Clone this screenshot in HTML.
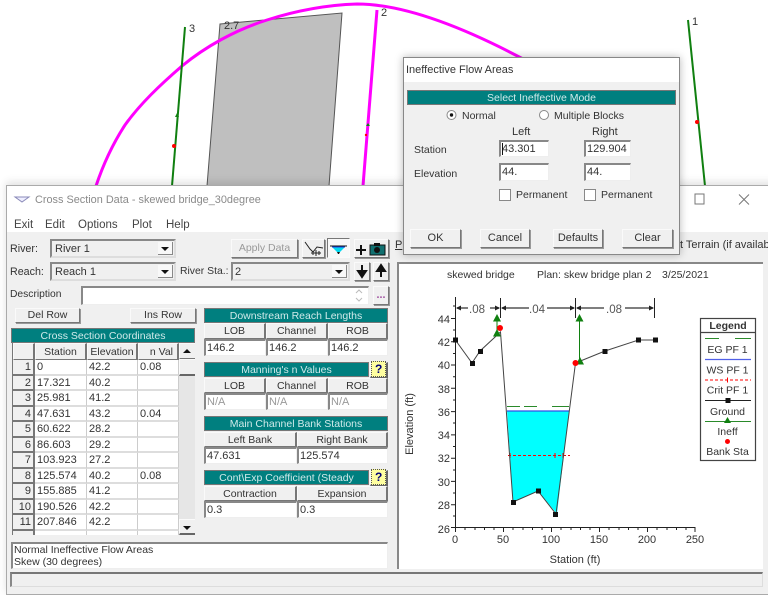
<!DOCTYPE html>
<html>
<head>
<meta charset="utf-8">
<style>
html,body{margin:0;padding:0;background:#fff}
body{width:768px;height:590px;position:relative;overflow:hidden;font-family:"Liberation Sans",sans-serif;font-size:11px;color:#333;filter:blur(.3px)}
div{position:absolute;box-sizing:border-box;white-space:nowrap}
svg{position:absolute;left:0;top:0}
.t{line-height:14px;height:14px}
.l{font-size:10.7px}
.teal{background:#007f7f;color:#cfeaea;text-align:center;font-size:10.5px;border:1px solid #777;line-height:14px!important}
.btn{background:#f0f0f0;border:1px solid;border-color:#fafafa #777 #777 #fafafa;box-shadow:1px 1px 0 #999;text-align:center;color:#333;font-size:10.7px}
.in{background:#fff;border:1px solid;border-color:#888 #eee #eee #888;border-width:2px 1px 1px 2px;padding-left:1px;color:#333;font-size:11px}
.cb{background:#f0f0f0;border:2px solid;border-color:#888 #ddd #ddd #888;padding-left:3px;font-size:11px;color:#333;line-height:16px!important}
.arr{right:1px;top:1px;bottom:1px;width:15px;background:#f8f8f8;border-right:1px solid #888;border-bottom:1px solid #888}
.arr:after{content:"";position:absolute;left:3px;top:5px;border:4px solid transparent;border-top:4px solid #111;border-bottom:0}
.cell{background:#fff;border-bottom:2px solid #ddd;border-right:1px solid #ccc;padding-left:2px;line-height:15px;font-size:11px;color:#333}
.rh{background:#f0f0f0;border-right:2px solid #777;border-bottom:2px solid #777;text-align:right;padding-right:2px;line-height:15px;font-size:11px;color:#333}
.h{background:#f0f0f0;border:1px solid;border-color:#fafafa #777 #777 #fafafa;border-width:1px 2px 1px 1px;text-align:center;line-height:14px;font-size:10.5px;color:#333}
.help{background:#f0f0f0;border:1px solid;border-color:#fafafa #666 #666 #fafafa;border-width:1px 2px 2px 1px;text-align:center;line-height:13px;font-weight:bold;color:#007;font-size:12px}
.help span{background:#ffffa0;padding:0 3px;border:1px dotted #555}
</style>
</head>
<body>

<!-- background drawing -->
<svg width="768" height="590" viewBox="0 0 768 590">
  <polygon points="220,24 342,13 329,186 207,186" fill="#bfbfbf" stroke="#555" stroke-width="1"/>
  <path d="M96,186 C103,165 112,145 125,125 C140,104 160,85 182,66 C205,47 235,30 267,20 C295,11 325,5 357,4 C395,4 450,20 525,60" fill="none" stroke="#ff00ff" stroke-width="3"/>
  <line x1="185" y1="27" x2="172" y2="186" stroke="#108010" stroke-width="2"/>
  <line x1="377" y1="10" x2="363" y2="186" stroke="#ff00ff" stroke-width="3"/>
  <line x1="688" y1="20" x2="705" y2="186" stroke="#108010" stroke-width="2"/>
  <circle cx="174" cy="146" r="2" fill="#f00"/>
  <circle cx="697" cy="122" r="2" fill="#f00"/>
  <path d="M177,113 l2,4 h-4z" fill="#108010"/>
  <path d="M368,123 l2,3 h-4z" fill="#108010"/>
  <circle cx="366" cy="135" r="1.2" fill="#f00"/>
</svg>
<div class="t" style="left:189px;top:22px;font-size:11px">3</div>
<div class="t" style="left:381px;top:6px;font-size:11px">2</div>
<div class="t" style="left:692px;top:15px;font-size:11px">1</div>
<div class="t" style="left:224px;top:19px;font-size:11px">2.7</div>

<!-- main window -->
<div style="left:6px;top:185px;width:770px;height:410px;background:#f0f0f0;border:1px solid #aaa;box-shadow:0 -3px 8px rgba(0,0,0,.12)">
  <div style="left:0;top:0;right:0;height:46px;background:#fff"></div>
</div>
<svg width="768" height="590" viewBox="0 0 768 590" style="pointer-events:none">
  <path d="M15,197 h14 l-7,5z" fill="#eef" stroke="#8a8ab8" stroke-width="1"/>
  <rect x="695" y="194" width="9" height="10" fill="none" stroke="#777"/>
  <path d="M739,194.500 l10,10 M749,194.500 l-10,10" stroke="#777" fill="none"/>
</svg>
<div class="t" style="left:35px;top:193px;font-size:10.9px;color:#8a8a8a">Cross Section Data - skewed bridge_30degree</div>
<div class="t" style="left:14px;top:218px;color:#444;font-size:11.5px">Exit</div>
<div class="t" style="left:45px;top:218px;color:#444;font-size:11.5px">Edit</div>
<div class="t" style="left:78px;top:218px;color:#444;font-size:11.5px">Options</div>
<div class="t" style="left:132px;top:218px;color:#444;font-size:11.5px">Plot</div>
<div class="t" style="left:166px;top:218px;color:#444;font-size:11.5px">Help</div>

<!-- top controls -->
<div class="t l" style="left:10px;top:242px">River:</div>
<div class="cb" style="left:50px;top:239px;width:126px;height:19px">River 1<div class="arr"></div></div>
<div class="t l" style="left:10px;top:265px">Reach:</div>
<div class="cb" style="left:50px;top:262px;width:126px;height:19px">Reach 1<div class="arr"></div></div>
<div class="t" style="left:180px;top:265px;font-size:10.4px">River Sta.:</div>
<div class="cb" style="left:231px;top:262px;width:119px;height:19px;padding-left:2px">2<div class="arr"></div></div>
<div class="btn" style="left:231px;top:239px;width:67px;height:19px;line-height:17px;color:#999;font-size:10.5px">Apply Data</div>
<div class="btn" style="left:302px;top:239px;width:23px;height:19px"></div>
<div class="btn" style="left:327px;top:238px;width:23px;height:20px;border-color:#777 #fafafa #fafafa #777;background:#f8f8f8;box-shadow:none"></div>
<div class="btn" style="left:354px;top:239px;width:35px;height:19px"></div>
<div class="btn" style="left:354px;top:262px;width:16px;height:19px"></div>
<div class="btn" style="left:373px;top:262px;width:16px;height:19px"></div>
<svg width="768" height="590" viewBox="0 0 768 590">
  <path d="M305,242 l5,7 l3,3 l4,-5 l6,1" fill="none" stroke="#222" stroke-width="1"/>
  <path d="M311,253 h10 M313,251 v4 M319,251 v4 M316,250 v6" stroke="#222" fill="none"/>
  <path d="M330,246 h17" stroke="#111" stroke-width="1"/>
  <path d="M332,247 h13 l-5,5 h-3z" fill="#00d8f0"/>
  <path d="M332,247 h13" stroke="#2040e0"/>
  <path d="M337,252 h3 l-1,2 h-1z" fill="#111"/>
  <path d="M361,245 v10 M356,250 h10" stroke="#111" stroke-width="2"/>
  <rect x="370" y="245" width="15" height="10" fill="#107070" stroke="#111"/>
  <rect x="374" y="243" width="6" height="3" fill="#111"/>
  <circle cx="377" cy="250" r="3" fill="#111"/>
  <path d="M362,265 v9 M358,271 l4,6 l4,-6z" stroke="#111" stroke-width="2" fill="#111"/>
  <path d="M381,268 v9 M377,271 l4,-6 l4,6z" stroke="#111" stroke-width="2" fill="#111"/>
</svg>
<div class="t" style="left:10px;top:288px;font-size:10.3px">Description</div>
<div class="in" style="left:81px;top:286px;width:288px;height:19px"></div>
<div class="btn" style="left:373px;top:286px;width:16px;height:19px;line-height:16px;color:#a050a0;font-weight:bold">...</div>
<svg width="768" height="590" viewBox="0 0 768 590">
  <path d="M356,293 l3,-3 l3,3 M356,298 l3,3 l3,-3" fill="none" stroke="#bbb"/>
</svg>
<div class="btn" style="left:15px;top:308px;width:65px;height:15px;line-height:13px;font-size:10.5px">Del Row</div>
<div class="btn" style="left:130px;top:308px;width:66px;height:15px;line-height:13px;font-size:10.5px">Ins Row</div>

<!-- coordinates table -->
<div class="teal" style="left:11px;top:328px;width:184px;height:15px">Cross Section Coordinates</div>
<div style="left:12px;top:343px;width:183px;height:192px;background:#f0f0f0;border-left:1px solid #777;overflow:hidden">
  <div class="h" style="left:0;top:0;width:22px;height:17px"></div>
  <div class="h" style="left:22px;top:0;width:52px;height:17px;line-height:17px">Station</div>
  <div class="h" style="left:74px;top:0;width:51px;height:17px;line-height:17px">Elevation</div>
  <div class="h" style="left:125px;top:0;width:41px;height:17px;line-height:17px;text-align:right;padding-right:4px">n Val</div>

  <div class="rh" style="left:0;top:17px;width:22px;height:15.5px">1</div><div class="cell" style="left:22px;top:17px;width:52px;height:15.5px">0</div><div class="cell" style="left:74px;top:17px;width:51px;height:15.5px">42.2</div><div class="cell" style="left:125px;top:17px;width:41px;height:15.5px">0.08</div>
  <div class="rh" style="left:0;top:32.5px;width:22px;height:15.5px">2</div><div class="cell" style="left:22px;top:32.5px;width:52px;height:15.5px">17.321</div><div class="cell" style="left:74px;top:32.5px;width:51px;height:15.5px">40.2</div><div class="cell" style="left:125px;top:32.5px;width:41px;height:15.5px"></div>
  <div class="rh" style="left:0;top:48px;width:22px;height:15.5px">3</div><div class="cell" style="left:22px;top:48px;width:52px;height:15.5px">25.981</div><div class="cell" style="left:74px;top:48px;width:51px;height:15.5px">41.2</div><div class="cell" style="left:125px;top:48px;width:41px;height:15.5px"></div>
  <div class="rh" style="left:0;top:63.5px;width:22px;height:15.5px">4</div><div class="cell" style="left:22px;top:63.5px;width:52px;height:15.5px">47.631</div><div class="cell" style="left:74px;top:63.5px;width:51px;height:15.5px">43.2</div><div class="cell" style="left:125px;top:63.5px;width:41px;height:15.5px">0.04</div>
  <div class="rh" style="left:0;top:79px;width:22px;height:15.5px">5</div><div class="cell" style="left:22px;top:79px;width:52px;height:15.5px">60.622</div><div class="cell" style="left:74px;top:79px;width:51px;height:15.5px">28.2</div><div class="cell" style="left:125px;top:79px;width:41px;height:15.5px"></div>
  <div class="rh" style="left:0;top:94.5px;width:22px;height:15.5px">6</div><div class="cell" style="left:22px;top:94.5px;width:52px;height:15.5px">86.603</div><div class="cell" style="left:74px;top:94.5px;width:51px;height:15.5px">29.2</div><div class="cell" style="left:125px;top:94.5px;width:41px;height:15.5px"></div>
  <div class="rh" style="left:0;top:110px;width:22px;height:15.5px">7</div><div class="cell" style="left:22px;top:110px;width:52px;height:15.5px">103.923</div><div class="cell" style="left:74px;top:110px;width:51px;height:15.5px">27.2</div><div class="cell" style="left:125px;top:110px;width:41px;height:15.5px"></div>
  <div class="rh" style="left:0;top:125.5px;width:22px;height:15.5px">8</div><div class="cell" style="left:22px;top:125.5px;width:52px;height:15.5px">125.574</div><div class="cell" style="left:74px;top:125.5px;width:51px;height:15.5px">40.2</div><div class="cell" style="left:125px;top:125.5px;width:41px;height:15.5px">0.08</div>
  <div class="rh" style="left:0;top:141px;width:22px;height:15.5px">9</div><div class="cell" style="left:22px;top:141px;width:52px;height:15.5px">155.885</div><div class="cell" style="left:74px;top:141px;width:51px;height:15.5px">41.2</div><div class="cell" style="left:125px;top:141px;width:41px;height:15.5px"></div>
  <div class="rh" style="left:0;top:156.5px;width:22px;height:15.5px">10</div><div class="cell" style="left:22px;top:156.5px;width:52px;height:15.5px">190.526</div><div class="cell" style="left:74px;top:156.5px;width:51px;height:15.5px">42.2</div><div class="cell" style="left:125px;top:156.5px;width:41px;height:15.5px"></div>
  <div class="rh" style="left:0;top:172px;width:22px;height:15.5px">11</div><div class="cell" style="left:22px;top:172px;width:52px;height:15.5px">207.846</div><div class="cell" style="left:74px;top:172px;width:51px;height:15.5px">42.2</div><div class="cell" style="left:125px;top:172px;width:41px;height:15.5px"></div>
  <div class="rh" style="left:0;top:187.5px;width:22px;height:15.5px"></div><div class="cell" style="left:22px;top:187.5px;width:52px;height:15.5px"></div><div class="cell" style="left:74px;top:187.5px;width:51px;height:15.5px"></div><div class="cell" style="left:125px;top:187.5px;width:41px;height:15.5px"></div>

  <div style="left:166px;top:0;width:17px;height:192px;background:#e6e6e6"></div>
  <div class="btn" style="left:166px;top:0;width:17px;height:16px;box-shadow:none"></div>
  <div class="btn" style="left:166px;top:16px;width:17px;height:17px;box-shadow:none;border-bottom:2px solid #666"></div>
  <div class="btn" style="left:166px;top:176px;width:17px;height:16px;box-shadow:none;border-bottom:2px solid #666"></div>
  <div style="left:170px;top:6px;border:4px solid transparent;border-bottom:4px solid #111;border-top:0"></div>
  <div style="left:170px;top:183px;border:4px solid transparent;border-top:4px solid #111;border-bottom:0"></div>
</div>

<!-- message + status -->
<div class="in" style="left:11px;top:542px;width:377px;height:27px;line-height:12px;font-size:10.5px;border-color:#888 #eee #eee #888">Normal Ineffective Flow Areas<br>Skew (30 degrees)</div>
<div style="left:10px;top:572px;width:753px;height:15px;background:#f0f0f0;border:1px solid;border-width:2px 1px 1px 2px;border-color:#777 #ddd #ddd #888"></div>

<!-- right tables -->
<div class="teal" style="left:204px;top:308px;width:184px;height:15px">Downstream Reach Lengths</div>
<div class="h" style="left:204px;top:323px;width:62px;height:16px">LOB</div>
<div class="h" style="left:266px;top:323px;width:62px;height:16px">Channel</div>
<div class="h" style="left:328px;top:323px;width:60px;height:16px">ROB</div>
<div class="in" style="left:204px;top:339px;width:62px;height:17px;line-height:15px">146.2</div>
<div class="in" style="left:266px;top:339px;width:62px;height:17px;line-height:15px">146.2</div>
<div class="in" style="left:328px;top:339px;width:60px;height:17px;line-height:15px">146.2</div>

<div class="teal" style="left:204px;top:362px;width:165px;height:15px">Manning's n Values</div>
<div class="help" style="left:370px;top:362px;width:18px;height:16px"><span>?</span></div>
<div class="h" style="left:204px;top:378px;width:62px;height:15px">LOB</div>
<div class="h" style="left:266px;top:378px;width:62px;height:15px">Channel</div>
<div class="h" style="left:328px;top:378px;width:60px;height:15px">ROB</div>
<div class="in" style="left:204px;top:393px;width:62px;height:17px;line-height:15px;color:#999">N/A</div>
<div class="in" style="left:266px;top:393px;width:62px;height:17px;line-height:15px;color:#999">N/A</div>
<div class="in" style="left:328px;top:393px;width:60px;height:17px;line-height:15px;color:#999">N/A</div>

<div class="teal" style="left:204px;top:416px;width:184px;height:15px">Main Channel Bank Stations</div>
<div class="h" style="left:204px;top:432px;width:93px;height:15px">Left Bank</div>
<div class="h" style="left:297px;top:432px;width:91px;height:15px">Right Bank</div>
<div class="in" style="left:204px;top:447px;width:93px;height:17px;line-height:15px">47.631</div>
<div class="in" style="left:297px;top:447px;width:91px;height:17px;line-height:15px">125.574</div>

<div class="teal" style="left:204px;top:470px;width:165px;height:15px">Cont\Exp Coefficient (Steady</div>
<div class="help" style="left:370px;top:470px;width:18px;height:16px"><span>?</span></div>
<div class="h" style="left:204px;top:486px;width:93px;height:15px">Contraction</div>
<div class="h" style="left:297px;top:486px;width:91px;height:15px">Expansion</div>
<div class="in" style="left:204px;top:501px;width:93px;height:17px;line-height:15px">0.3</div>
<div class="in" style="left:297px;top:501px;width:91px;height:17px;line-height:15px">0.3</div>

<!-- plot -->
<div class="t" style="left:395px;top:238px;font-size:11px;text-decoration:underline">P</div>
<div class="t" style="left:680px;top:238px;width:88px;overflow:hidden;font-size:11px">t Terrain (if availab</div>
<div style="left:397px;top:262px;width:366px;height:307px;background:#fff;border:solid #888;border-width:2px 0 0 2px"></div>
<svg width="768" height="590" viewBox="0 0 768 590" font-family="Liberation Sans, sans-serif" font-size="11" fill="#333">
  <text x="447" y="278" font-size="10.5">skewed bridge</text>
  <text x="537" y="278" font-size="10.5">Plan: skew bridge plan 2</text>
  <text x="662" y="278" font-size="10.5">3/25/2021</text>

  <!-- water -->
  <polygon points="507,411 569,411 557,514 538,491 513,502" fill="#00ffff"/>
  <path d="M507,406.500 h13 M524,406.500 h13 M552,406.500 h17" stroke="#2a8a2a" stroke-width="1" fill="none"/>
  <path d="M507,411 h62" stroke="#3050e8" stroke-width="1.200" fill="none"/>
  <path d="M508,455.500 h62" stroke="#f00" stroke-width="1" stroke-dasharray="3 2" fill="none"/>
  <path d="M510,453 v5 M555,453 v5 M563,453 v5" stroke="#f00"/>

  <!-- axes -->
  <path d="M455.500,297 V527.500 H695" fill="none" stroke="#222" stroke-width="1"/>
  <path d="M451,318.500h5M451,341.800h5M451,365h5M451,388.300h5M451,411.600h5M451,434.900h5M451,458.200h5M451,481.400h5M451,504.700h5M451,527.500h5" stroke="#222"/>
  <path d="M453,330h3M453,353.500h3M453,376.700h3M453,400h3M453,423h3M453,446.500h3M453,470h3M453,493h3M453,516h3M453,306h3" stroke="#222"/>
  <path d="M455.500,527v5M503.500,527v5M551.500,527v5M599.500,527v5M647.500,527v5M695,527v5" stroke="#222"/>
  <path d="M465,527v3M475,527v3M484.500,527v3M494,527v3M513,527v3M523,527v3M532.500,527v3M542,527v3M561,527v3M571,527v3M580.500,527v3M590,527v3M609,527v3M619,527v3M628.500,527v3M638,527v3M657,527v3M667,527v3M676.500,527v3M686,527v3" stroke="#222"/>
  <g text-anchor="end" font-size="11">
    <text x="450" y="323">44</text><text x="450" y="346">42</text><text x="450" y="369">40</text><text x="450" y="393">38</text><text x="450" y="416">36</text><text x="450" y="439">34</text><text x="450" y="462">32</text><text x="450" y="486">30</text><text x="450" y="509">28</text><text x="450" y="533">26</text>
  </g>
  <g text-anchor="middle" font-size="11">
    <text x="455" y="543">0</text><text x="503" y="543">50</text><text x="551" y="543">100</text><text x="599" y="543">150</text><text x="647" y="543">200</text><text x="695" y="543">250</text>
    <text x="575" y="563">Station (ft)</text>
    <text transform="translate(413,424) rotate(-90)">Elevation (ft)</text>
  </g>

  <!-- Manning bars -->
  <path d="M455.500,298v20M500.500,298v20M575.500,298v20M654.500,298v20" stroke="#222" fill="none"/>
  <path d="M457,308h11M490,308h9M502,308h27M547,308h27M577,308h27M625,308h28" stroke="#555" stroke-width="1.400" fill="none"/>
  <path d="M456,308l5,-2.500v5zM500,308l-5,-2.500v5zM501,308l5,-2.500v5zM575,308l-5,-2.500v5zM576,308l5,-2.500v5zM654,308l-5,-2.500v5z" fill="#222"/>
  <g text-anchor="middle" font-size="11.500" fill="#555"><text x="477" y="313">.08</text><text x="537" y="313">.04</text><text x="614" y="313">.08</text></g>

  <!-- ground -->
  <polyline points="455,339.500 472,363 480,351 500.500,332 513,502 538,491 556,514 575.500,363 605,351 638.500,340 654.500,340" fill="none" stroke="#444" stroke-width="1"/>
  <g fill="#111">
    <rect x="453" y="337.500" width="5" height="5"/><rect x="470" y="361" width="5" height="5"/><rect x="478" y="349" width="5" height="5"/>
    <rect x="511" y="500" width="5" height="5"/><rect x="536" y="488.500" width="5" height="5"/><rect x="553" y="512" width="5" height="5"/>
    <rect x="602.500" y="349" width="5" height="5"/><rect x="636" y="337.500" width="5" height="5"/><rect x="653" y="337.500" width="5" height="5"/>
  </g>
  <!-- ineff -->
  <path d="M497,318v14M579.500,318v42" stroke="#108010" stroke-width="1" fill="none"/>
  <path d="M497,314l4,7.500h-8zM497,329l4,7.500h-8zM579.500,314l4,7.500h-8zM580,357l4,7.500h-8z" fill="#108010"/>
  <!-- bank -->
  <circle cx="500" cy="328" r="3" fill="#f00"/><circle cx="575.500" cy="363" r="3" fill="#f00"/>

  <!-- legend -->
  <rect x="700.500" y="318.500" width="55" height="142" fill="#fff" stroke="#444" stroke-width="1.200"/>
  <line x1="700" y1="332.500" x2="756" y2="332.500" stroke="#444" stroke-width="1.200"/>
  <g text-anchor="middle" font-size="10.500">
    <text x="728" y="329" font-weight="bold" font-size="10.500">Legend</text>
    <text x="727.500" y="353">EG PF 1</text>
    <text x="727.500" y="373.500">WS PF 1</text>
    <text x="727.500" y="393.500">Crit PF 1</text>
    <text x="727.500" y="415">Ground</text>
    <text x="727.500" y="435">Ineff</text>
    <text x="727.500" y="455">Bank Sta</text>
  </g>
  <path d="M705,338.500h14M735,338.500h16" stroke="#2a8a2a" fill="none"/>
  <path d="M705,359.500h46" stroke="#5060e8" stroke-width="1.200" fill="none"/>
  <path d="M705,380h46" stroke="#f00" stroke-dasharray="3 2" fill="none"/><path d="M727.500,377.500v5" stroke="#f00"/>
  <path d="M705,400.500h46" stroke="#222" fill="none"/><rect x="725.500" y="398" width="5" height="5" fill="#111"/>
  <path d="M705,421.500h46" stroke="#2a8a2a" fill="none"/><path d="M727.500,417l3.500,6h-7z" fill="#108010"/>
  <circle cx="727.500" cy="441.500" r="2.500" fill="#f00"/>
</svg>

<!-- dialog -->
<div style="left:403px;top:57px;width:277px;height:198px;background:#f0f0f0;border:1px solid #888;box-shadow:0 0 8px rgba(0,0,0,.28)">
  <div style="left:0;top:0;right:0;height:24px;background:#fff"></div>
</div>
<div class="t" style="left:406px;top:63px;font-size:11px">Ineffective Flow Areas</div>
<div class="teal" style="left:407px;top:90px;width:269px;height:15px">Select Ineffective Mode</div>
<svg width="768" height="590" viewBox="0 0 768 590">
  <circle cx="451.500" cy="115" r="4.500" fill="#fff" stroke="#888"/><circle cx="451.500" cy="115" r="1.700" fill="#111"/>
  <circle cx="544" cy="115" r="4.500" fill="#fff" stroke="#888"/>
</svg>
<div class="t" style="left:462px;top:109px;font-size:10.5px">Normal</div>
<div class="t" style="left:554px;top:109px;font-size:10.5px">Multiple Blocks</div>
<div class="t" style="left:512px;top:125px;font-size:11px">Left</div>
<div class="t" style="left:592px;top:125px;font-size:11px">Right</div>
<div class="t" style="left:414px;top:143px;font-size:10.5px">Station</div>
<div class="t" style="left:414px;top:167px;font-size:10.5px">Elevation</div>
<div class="in" style="left:499px;top:140px;width:50px;height:17px;line-height:15px">43.301</div>
<div style="left:502px;top:143px;width:1px;height:12px;background:#111"></div>
<div class="in" style="left:584px;top:140px;width:47px;height:17px;line-height:15px">129.904</div>
<div class="in" style="left:499px;top:163px;width:50px;height:18px;line-height:15px">44.</div>
<div class="in" style="left:584px;top:163px;width:47px;height:18px;line-height:15px">44.</div>
<div style="left:499px;top:189px;width:12px;height:12px;background:#fff;border:1px solid #888"></div>
<div style="left:584px;top:189px;width:12px;height:12px;background:#fff;border:1px solid #888"></div>
<div class="t" style="left:516px;top:188px;font-size:10.5px">Permanent</div>
<div class="t" style="left:601px;top:188px;font-size:10.5px">Permanent</div>
<div class="btn" style="left:410px;top:229px;width:51px;height:19px;line-height:17px;font-size:11px">OK</div>
<div class="btn" style="left:480px;top:229px;width:50px;height:19px;line-height:17px;font-size:11px">Cancel</div>
<div class="btn" style="left:553px;top:229px;width:50px;height:19px;line-height:17px;font-size:11px">Defaults</div>
<div class="btn" style="left:622px;top:229px;width:51px;height:19px;line-height:17px;font-size:11px">Clear</div>

</body>
</html>
